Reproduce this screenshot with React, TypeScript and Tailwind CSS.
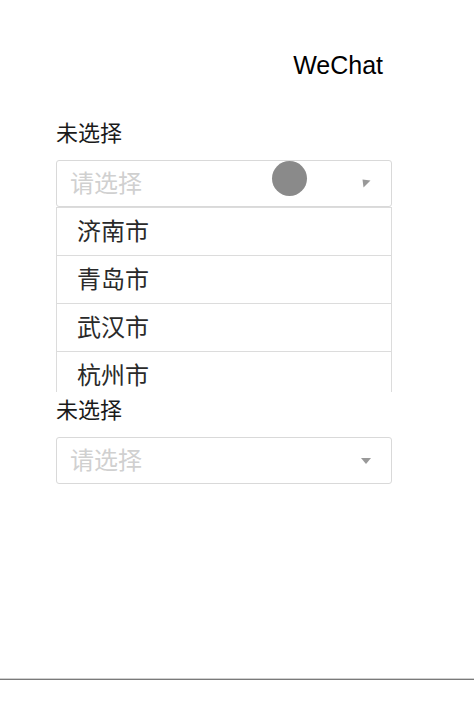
import React from 'react'

const cjk = { fontFamily: '"Liberation Sans", "Noto Sans CJK SC", sans-serif' }
const cities = ['济南市', '青岛市', '武汉市', '杭州市']

function Arrow({ tilted }: { tilted?: boolean }) {
  if (tilted) {
    return (
      <svg width="9" height="9" viewBox="0 0 9 9">
        <path d="M0.5 0.5 L8.5 1.5 L1.5 8.5 Z" fill="#999" />
      </svg>
    )
  }
  return (
    <svg width="10" height="6" viewBox="0 0 10 6">
      <path d="M0 0 L10 0 L5 6 Z" fill="#999" />
    </svg>
  )
}

function SelectBox({ open, tilted }: { open?: boolean; tilted?: boolean }) {
  return (
    <div className="relative flex h-[47px] w-[336px] items-center justify-between rounded-[3px] border border-[#d9d9d9] bg-white pl-[13px] pr-[20px]">
      <span className="text-[24px] leading-[30px] text-[#d0d0d0]">请选择</span>
      <Arrow tilted={tilted} />
      {open && <div className="absolute left-[215px] top-[0px] h-[35px] w-[35px] rounded-full bg-[#8a8a8a]" />}
    </div>
  )
}

export default function App() {
  return (
    <div className="flex h-[711px] w-[474px] flex-col bg-white text-[#1a1a1a]" style={cjk}>
      <div className="flex justify-end pr-[91px] pt-[50px]">
        <span className="text-[25px] leading-[30px] text-black">WeChat</span>
      </div>

      <div className="mt-[39px] pl-[56px]">
        <p className="text-[22px] leading-[30px]">未选择</p>
        <div className="mt-[11px]">
          <SelectBox open tilted />
        </div>
        <div className="h-[185px] w-[336px] overflow-hidden">
          {cities.map(c => (
            <div key={c} className="flex h-[48px] items-center border border-b-0 border-[#dcdcdc] pl-[20px] text-[24px] text-[#2a2a2a]">
              {c}
            </div>
          ))}
        </div>

        <p className="mt-[4px] text-[22px] leading-[30px]">未选择</p>
        <div className="mt-[11px]">
          <SelectBox />
        </div>
      </div>

      <div className="mt-auto mb-[31px] h-[2px] w-full border-t border-[#cfcfcf] bg-[#7a7a7a]" />
    </div>
  )
}
